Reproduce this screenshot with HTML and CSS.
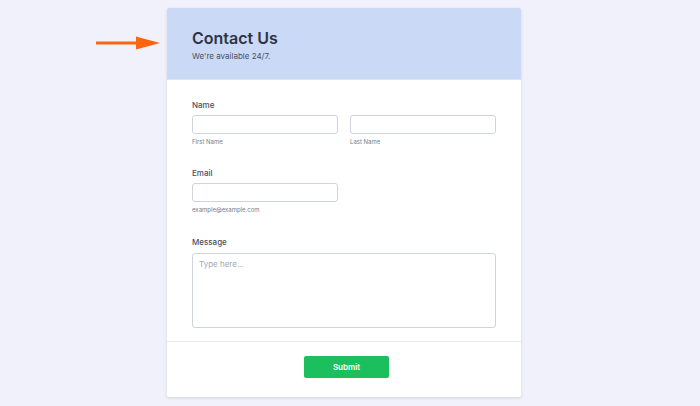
FILE: index.html
```html
<!DOCTYPE html>
<html lang="en">
<head>
<meta charset="utf-8">
<title>Contact Us</title>
<link rel="stylesheet" href="styles.css">
</head>
<body>
<div class="page">
  <svg class="arrow" width="64" height="16" viewBox="0 0 64 16" aria-hidden="true">
    <rect x="0" y="6.5" width="42" height="3" fill="#ff650f"/>
    <polygon points="40,1.5 64,8 40,14.5" fill="#ff650f"/>
  </svg>
  <form class="card">
    <header class="card-head">
      <h1 class="title">Contact Us</h1>
      <p class="subtitle">We're available 24/7.</p>
    </header>
    <div class="card-body">
      <div class="field">
        <label class="label">Name</label>
        <div class="row">
          <div class="col">
            <input class="input" type="text">
            <span class="hint">First Name</span>
          </div>
          <div class="col">
            <input class="input" type="text">
            <span class="hint">Last Name</span>
          </div>
        </div>
      </div>
      <div class="field field-email">
        <label class="label">Email</label>
        <div class="row">
          <div class="col">
            <input class="input" type="email">
            <span class="hint">example@example.com</span>
          </div>
          <div class="col"></div>
        </div>
      </div>
      <div class="field field-message">
        <label class="label">Message</label>
        <textarea class="textarea" placeholder="Type here..."></textarea>
      </div>
    </div>
    <footer class="card-foot">
      <button class="submit" type="button">Submit</button>
    </footer>
  </form>
</div>
</body>
</html>
```
FILE: styles.css
```css
* { box-sizing: border-box; }
html, body { margin: 0; padding: 0; }
body {
  background: #f1f1fb;
  font-family: Inter, "Noto Sans", sans-serif;
  height: 406px;
  overflow: hidden;
}
.page {
  display: flex;
  align-items: flex-start;
  gap: 7px;
  padding: 8px 0 0 96px;
}
.arrow {
  flex: none;
  margin-top: 27px;
  display: block;
}
.card {
  width: 354px;
  background: #fff;
  box-shadow: 0 1px 3px rgba(40, 40, 80, 0.15);
  border-radius: 2px;
  overflow: hidden;
}
.card-head {
  height: 72px;
  background: #cad9f6;
  border-bottom: 1px solid #dbe2f2;
  padding: 21px 25px 0;
}
.title {
  margin: 0;
  font-size: 16px;
  line-height: 19px;
  font-weight: 600;
  color: #2d3446;
}
.subtitle {
  margin: 3px 0 0;
  font-size: 8px;
  line-height: 10px;
  color: #4b5060;
}
.card-body {
  padding: 20px 25px 13px;
}
.field-email { margin-top: 22px; }
.field-message { margin-top: 23px; }
.label {
  display: block;
  font-size: 8px;
  line-height: 10px;
  font-weight: 500;
  color: #4a4f5e;
  margin-bottom: 5px;
}
.field-message .label { margin-bottom: 6px; }
.row {
  display: flex;
  gap: 12px;
}
.col {
  flex: 1;
  display: flex;
  flex-direction: column;
}
.input {
  height: 19px;
  width: 100%;
  border: 1px solid #cfd3de;
  border-radius: 3px;
  background: #fff;
  margin: 0;
  padding: 0 5px;
}
.hint {
  margin-top: 4px;
  font-size: 6px;
  line-height: 8px;
  color: #777b88;
}
.textarea {
  display: block;
  width: 100%;
  height: 75px;
  margin: 0;
  border: 1px solid #cfd3de;
  border-radius: 3px;
  padding: 5px 6px;
  font-family: Inter, "Noto Sans", sans-serif;
  font-size: 8px;
  line-height: 10px;
  color: #333;
  resize: none;
}
.textarea::placeholder { color: #a4a8b4; }
.card-foot {
  border-top: 1px solid #e9e9f0;
  padding: 14px 0 19px 5px;
  display: flex;
  justify-content: center;
}
.submit {
  width: 85px;
  height: 22px;
  border: none;
  border-radius: 2px;
  background: #1cbf5d;
  color: #fff;
  font-family: Inter, "Noto Sans", sans-serif;
  font-size: 8px;
  font-weight: 600;
  cursor: pointer;
}
```
